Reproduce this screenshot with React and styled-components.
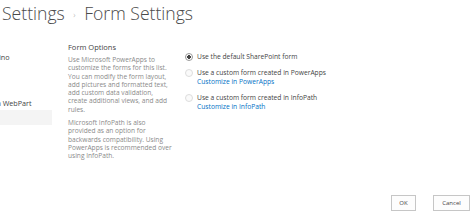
import React from "react";
import styled, { createGlobalStyle } from "styled-components";

const GlobalStyle = createGlobalStyle`
  html, body {
    margin: 0;
    padding: 0;
    background: #fff;
    overflow: hidden;
  }
  body {
    font-family: "Open Sans", "Noto Sans", sans-serif;
    color: #444;
  }
`;

const App = () => {
  return (
    <Page>
      <GlobalStyle />
      <Title>
        Settings <Chevron>›</Chevron> Form Settings
      </Title>
      <Body>
        <SideNav>
          <NavItem>Demo Casino</NavItem>
          <NavItem gap="36px">Navigation WebPart</NavItem>
          <NavBox />
        </SideNav>
        <Section>
          <SectionTitle>Form Options</SectionTitle>
          <Description>
            Use Microsoft PowerApps to
            <br />
            customize the forms for this list.
            <br />
            You can modify the form layout,
            <br />
            add pictures and formatted text,
            <br />
            add custom data validation,
            <br />
            create additional views, and add
            <br />
            rules.
          </Description>
          <Description>
            Microsoft InfoPath is also
            <br />
            provided as an option for
            <br />
            backwards compatibility. Using
            <br />
            PowerApps is recommended over
            <br />
            using InfoPath.
          </Description>
        </Section>
        <Options>
          <Option>
            <Radio checked />
            <div>
              <Label>Use the default SharePoint form</Label>
            </div>
          </Option>
          <Option>
            <Radio />
            <div>
              <Label>Use a custom form created in PowerApps</Label>
              <Link href="#">Customize in PowerApps</Link>
            </div>
          </Option>
          <Option>
            <Radio />
            <div>
              <Label>Use a custom form created in InfoPath</Label>
              <Link href="#">Customize in InfoPath</Link>
            </div>
          </Option>
        </Options>
      </Body>
      <Footer>
        <Button>OK</Button>
        <Button wide>Cancel</Button>
      </Footer>
    </Page>
  );
};

export default App;

const Page = styled.div`
  width: 474px;
  height: 217px;
  display: flex;
  flex-direction: column;
  overflow: hidden;
`;

const Title = styled.h1`
  margin: 0;
  padding: 0 0 0 2px;
  height: 30px;
  font-size: 17.6px;
  font-weight: 300;
  color: #4a4a4a;
  line-height: 26px;
  white-space: nowrap;
`;

const Chevron = styled.span`
  display: inline-block;
  font-size: 9px;
  color: #999;
  margin: 0 4px;
  vertical-align: 2px;
`;

const Body = styled.div`
  display: flex;
  flex: 1;
  padding-top: 12px;
`;

const SideNav = styled.div`
  width: 87px;
  margin-left: -35px;
  flex-shrink: 0;
  display: flex;
  flex-direction: column;
  padding-top: 10px;
`;

const NavItem = styled.div`
  font-size: 7.2px;
  color: #444;
  white-space: nowrap;
  margin-top: ${(p) => p.gap || "0"};
  line-height: 10px;
`;

const NavBox = styled.div`
  margin-top: 2px;
  height: 15px;
  background: #f4f4f4;
`;

const Section = styled.div`
  width: 117px;
  flex-shrink: 0;
  margin-left: 16px;
`;

const SectionTitle = styled.div`
  font-size: 7.5px;
  color: #444;
  line-height: 10px;
  margin-bottom: 4px;
`;

const Description = styled.p`
  margin: 0 0 5px;
  font-size: 6.6px;
  line-height: 8.3px;
  color: #8a8a8a;
  white-space: nowrap;
`;

const Options = styled.div`
  display: flex;
  flex-direction: column;
  gap: 6.5px;
  padding-top: 10px;
`;

const Option = styled.div`
  display: flex;
  align-items: flex-start;
  gap: 4px;
`;

const Radio = styled.span`
  width: 6px;
  height: 6px;
  margin-top: 1px;
  border-radius: 50%;
  border: 1px solid ${(p) => (p.checked ? "#999" : "#ddd")};
  background: ${(p) =>
    p.checked ? "radial-gradient(circle, #444 0 1.6px, #fff 2px)" : "#fafafa"};
  flex-shrink: 0;
`;

const Label = styled.div`
  font-size: 6.7px;
  line-height: 9px;
  color: #444;
  white-space: nowrap;
`;

const Link = styled.a`
  display: block;
  font-size: 6.7px;
  line-height: 10px;
  color: #0072c6;
  text-decoration: none;
  white-space: nowrap;
`;

const Footer = styled.div`
  display: flex;
  justify-content: flex-end;
  gap: 17px;
  padding: 0 4px 6px 0;
`;

const Button = styled.button`
  width: ${(p) => (p.wide ? "37px" : "25px")};
  height: 16px;
  padding: 0;
  border: 1px solid #c6c6c6;
  background: #fdfdfd;
  font-family: "Open Sans", "Noto Sans", sans-serif;
  font-size: 6px;
  color: #444;
`;
